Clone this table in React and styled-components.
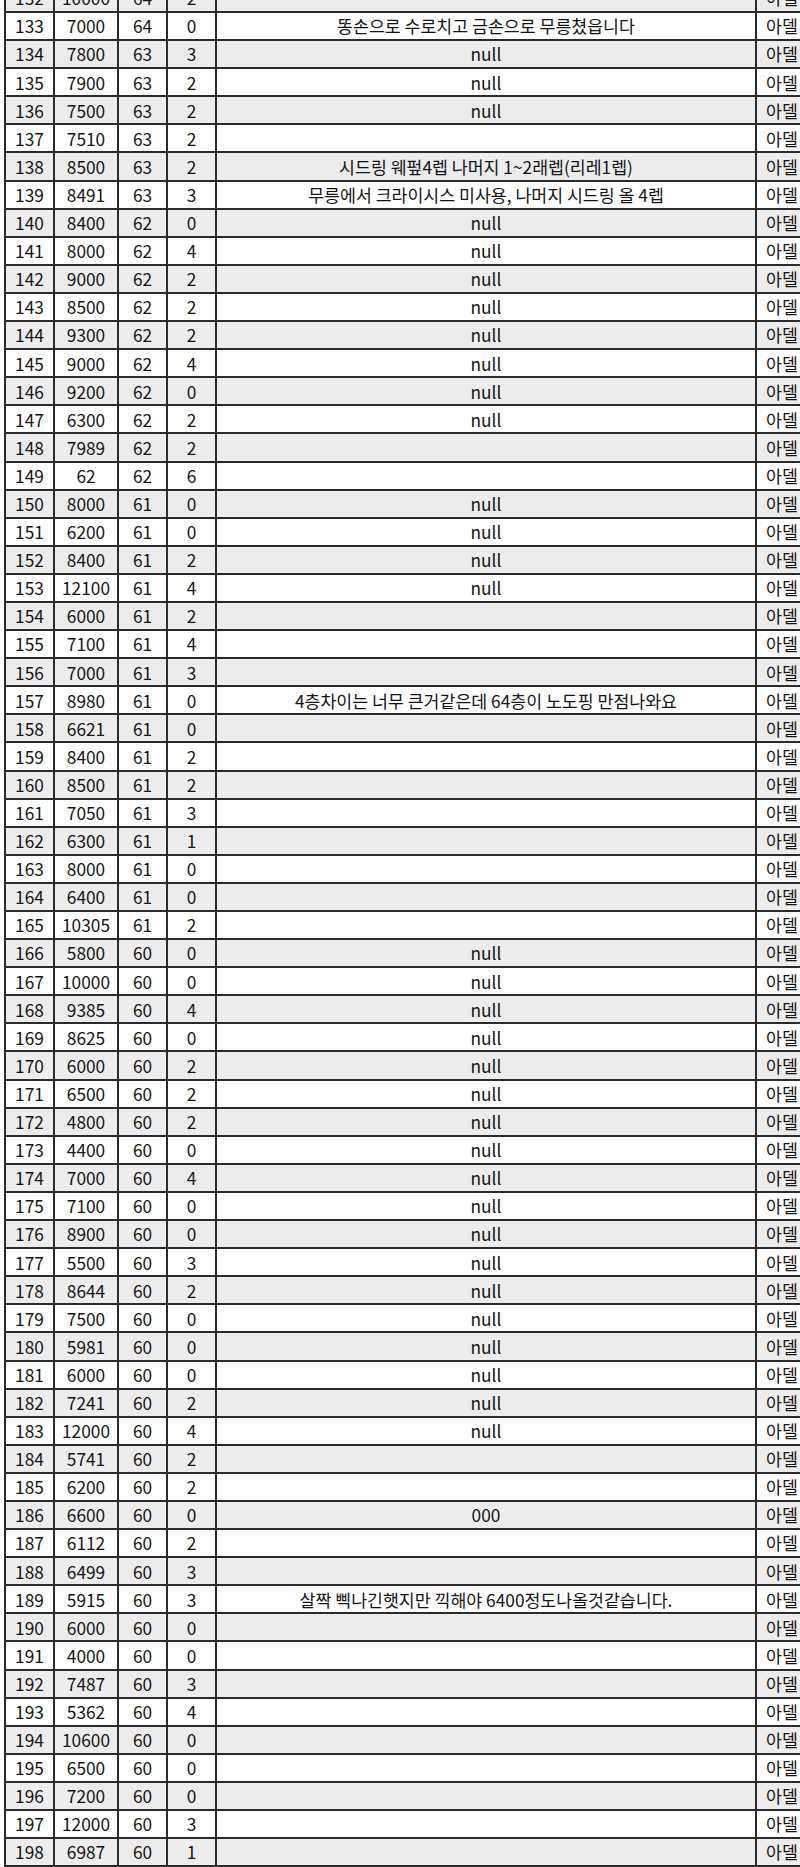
import React from "react";
import styled, { createGlobalStyle } from "styled-components";

const Global = createGlobalStyle`
  html, body {
    margin: 0;
    padding: 0;
    background: #ffffff;
    overflow: hidden;
  }
  body {
    font-family: "Noto Sans CJK KR", "Noto Sans", sans-serif;
    color: #141414;
  }
`;

const Viewport = styled.div`
  width: 800px;
  height: 1867px;
  overflow: hidden;
  padding-left: 4px;
  box-sizing: border-box;
`;

const Table = styled.table`
  border-collapse: collapse;
  table-layout: fixed;
  width: 803px;
  margin-top: -17.1px;
  font-size: 17.3px;
`;

const Row = styled.tr`
  height: 28.1px;
  background: ${(p) => (p.$shaded ? "#ececec" : "#ffffff")};
`;

const Cell = styled.td`
  border: 2px solid #2b2b2b;
  padding: 0;
  text-align: center;
  vertical-align: middle;
  white-space: nowrap;
  overflow: hidden;
  line-height: 1;
`;

const cols = [49, 64, 49, 49, 540, 52];

const raw = `132|10000|64|2|
133|7000|64|0|똥손으로 수로치고 금손으로 무릉쳤읍니다
134|7800|63|3|null
135|7900|63|2|null
136|7500|63|2|null
137|7510|63|2|
138|8500|63|2|시드링 웨펖4렙 나머지 1~2래렙(리레1렙)
139|8491|63|3|무릉에서 크라이시스 미사용, 나머지 시드링 올 4렙
140|8400|62|0|null
141|8000|62|4|null
142|9000|62|2|null
143|8500|62|2|null
144|9300|62|2|null
145|9000|62|4|null
146|9200|62|0|null
147|6300|62|2|null
148|7989|62|2|
149|62|62|6|
150|8000|61|0|null
151|6200|61|0|null
152|8400|61|2|null
153|12100|61|4|null
154|6000|61|2|
155|7100|61|4|
156|7000|61|3|
157|8980|61|0|4층차이는 너무 큰거같은데 64층이 노도핑 만점나와요
158|6621|61|0|
159|8400|61|2|
160|8500|61|2|
161|7050|61|3|
162|6300|61|1|
163|8000|61|0|
164|6400|61|0|
165|10305|61|2|
166|5800|60|0|null
167|10000|60|0|null
168|9385|60|4|null
169|8625|60|0|null
170|6000|60|2|null
171|6500|60|2|null
172|4800|60|2|null
173|4400|60|0|null
174|7000|60|4|null
175|7100|60|0|null
176|8900|60|0|null
177|5500|60|3|null
178|8644|60|2|null
179|7500|60|0|null
180|5981|60|0|null
181|6000|60|0|null
182|7241|60|2|null
183|12000|60|4|null
184|5741|60|2|
185|6200|60|2|
186|6600|60|0|000
187|6112|60|2|
188|6499|60|3|
189|5915|60|3|살짝 삑나긴햇지만 끽해야 6400정도나올것같습니다.
190|6000|60|0|
191|4000|60|0|
192|7487|60|3|
193|5362|60|4|
194|10600|60|0|
195|6500|60|0|
196|7200|60|0|
197|12000|60|3|
198|6987|60|1|`;

const rows = raw.split("\n").map((l) => {
  const [no, score, floor, lvl, note] = l.split("|");
  return { no, score, floor, lvl, note, name: "아델" };
});

export default function App() {
  return (
    <>
      <Global />
      <Viewport>
        <Table>
          <colgroup>
            {cols.map((w, i) => (
              <col key={i} style={{ width: w }} />
            ))}
          </colgroup>
          <tbody>
            {rows.map((r) => (
              <Row key={r.no} $shaded={Number(r.no) % 2 === 0}>
                <Cell>{r.no}</Cell>
                <Cell>{r.score}</Cell>
                <Cell>{r.floor}</Cell>
                <Cell>{r.lvl}</Cell>
                <Cell>{r.note}</Cell>
                <Cell>{r.name}</Cell>
              </Row>
            ))}
          </tbody>
        </Table>
      </Viewport>
    </>
  );
}
